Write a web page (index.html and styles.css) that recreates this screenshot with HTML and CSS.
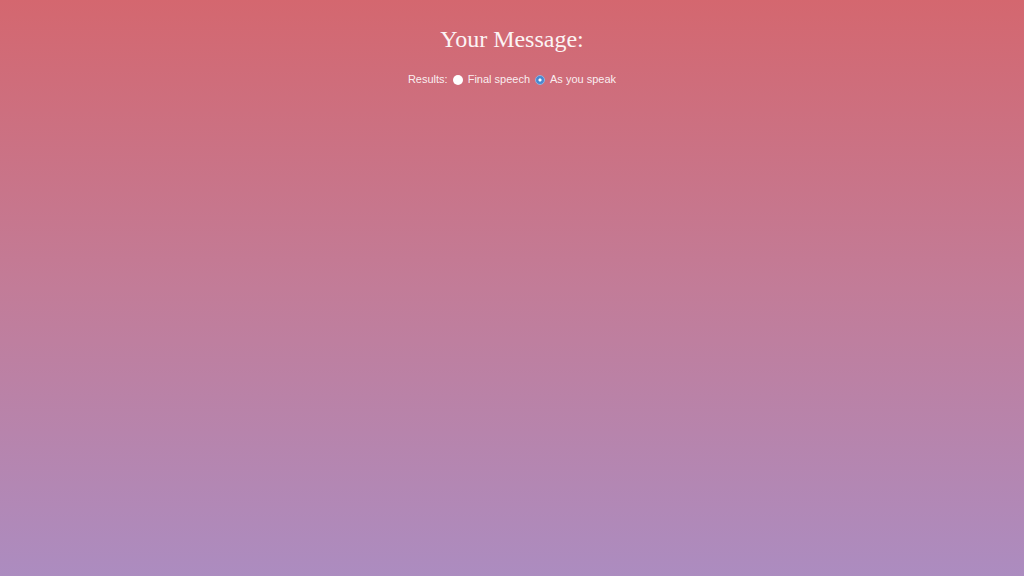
FILE: index.html
```html
<!DOCTYPE html>
<html>
<head>
<meta charset="utf-8">
<link rel="stylesheet" href="styles.css">
</head>
<body>
<main class="page">
  <h1 class="title">Your Message:</h1>
  <div class="results">
    <span class="label">Results:</span>
    <label class="opt"><span class="radio"></span>Final speech</label>
    <label class="opt"><span class="radio checked"></span>As you speak</label>
  </div>
</main>
</body>
</html>
```

FILE: styles.css
```css
html, body {
  margin: 0;
  height: 100%;
}
body {
  background: linear-gradient(to bottom, #d4676f 0%, #c27c98 50%, #ac8cc0 100%);
  color: #fff;
}
.page {
  display: flex;
  flex-direction: column;
  align-items: center;
  padding-top: 25px;
}
.title {
  margin: 0;
  font-family: "Liberation Serif", serif;
  font-weight: normal;
  font-size: 24px;
  line-height: 28px;
  color: #fcf4f4;
}
.results {
  margin-top: 19px;
  display: flex;
  align-items: center;
  gap: 5px;
  font-family: "Liberation Sans", Arial, sans-serif;
  font-size: 11px;
  line-height: 14px;
  color: rgba(255,255,255,0.9);
}
.opt {
  display: flex;
  align-items: center;
  gap: 5px;
}
.radio {
  width: 10px;
  height: 10px;
  border-radius: 50%;
  background: #fff;
  margin-top: 2px;
  box-sizing: border-box;
}
.radio.checked {
  background: radial-gradient(circle, #fff 0 1.3px, #4a88d0 1.8px);
  border: 1px solid #8fb4e0;
}
```
